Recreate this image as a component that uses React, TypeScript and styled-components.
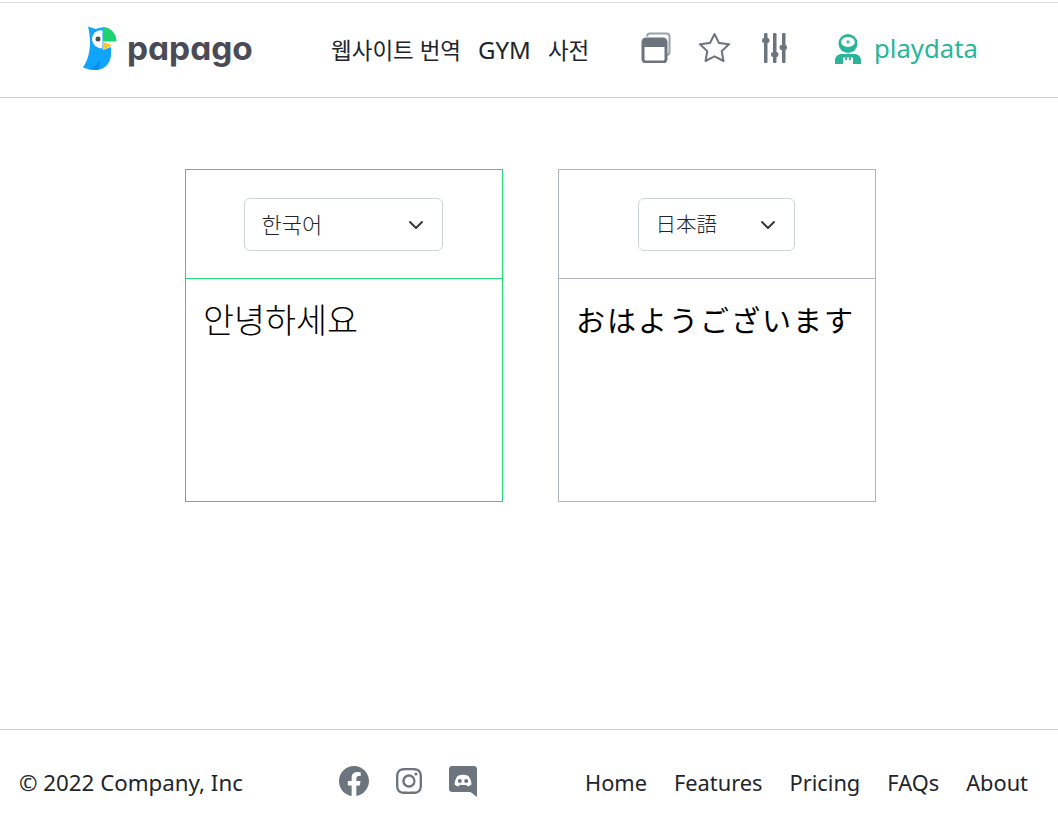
import React from 'react';
import styled, { createGlobalStyle } from 'styled-components';
import { BsFacebook, BsInstagram, BsStar } from 'react-icons/bs';

const GlobalStyle = createGlobalStyle`
  html, body {
    margin: 0;
    padding: 0;
    background: #fff;
    font-family: "Noto Sans", "Noto Sans CJK KR", sans-serif;
  }
`;

const Page = styled.div`
  width: 1058px;
  height: 832px;
  padding-top: 2px;
  box-sizing: border-box;
  display: flex;
  flex-direction: column;
  overflow: hidden;
`;

const Header = styled.header`
  height: 96px;
  box-sizing: border-box;
  border-top: 1px solid #dcdcdc;
  border-bottom: 1px solid #cfcfcf;
  display: flex;
  align-items: center;
  padding-left: 83px;
`;

const Logo = styled.a`
  display: flex;
  align-items: center;
  gap: 10px;
  width: 248px;
  margin-bottom: 5px;
  font-family: Inter, sans-serif;
  font-feature-settings: "cv11";
  font-size: 33.4px;
  font-weight: 700;
  color: #4b4a57;
`;

const Nav = styled.nav`
  display: flex;
  align-items: baseline;
  gap: 17px;
  width: 310px;
  margin-bottom: 2px;
  font-size: 22.5px;
  color: #212529;
`;

const NavLink = styled.a<{ $size?: number }>`
  white-space: nowrap;
  ${(p) => p.$size && `font-size: ${p.$size}px;`}
`;

const IconBar = styled.div`
  display: flex;
  align-items: center;
  gap: 28px;
  width: 194px;
  margin-bottom: 5px;
  color: #6c757d;
`;

const Star = styled(BsStar)`
  margin-right: 3px;
`;

const Profile = styled.a`
  display: flex;
  align-items: center;
  gap: 13px;
  margin-bottom: 3px;
  font-size: 25.7px;
  color: #2ab59a;
`;

const Main = styled.main`
  flex: 1;
  display: flex;
  gap: 55px;
  padding: 71px 0 0 185px;
`;

const Card = styled.section<{ $accent: string }>`
  width: 318px;
  height: 333px;
  box-sizing: border-box;
  border: 1px solid ${(p) => p.$accent};
  display: flex;
  flex-direction: column;
`;

const CardHead = styled.div<{ $accent: string }>`
  height: 109px;
  box-sizing: border-box;
  border-bottom: 1px solid ${(p) => p.$accent};
  display: flex;
  justify-content: center;
  align-items: flex-start;
  padding-top: 28px;
`;

const Select = styled.select<{ $width: number; $size: number }>`
  width: ${(p) => p.$width}px;
  height: 53px;
  margin-right: 2px;
  box-sizing: border-box;
  appearance: none;
  border: 1px solid #ced4da;
  border-radius: 6px;
  padding: 0 17px 4px;
  font-family: "Noto Sans CJK KR", sans-serif;
  font-size: ${(p) => p.$size}px;
  font-weight: 300;
  color: #212529;
  background: #fff url("data:image/svg+xml,%3csvg xmlns='http://www.w3.org/2000/svg' viewBox='0 0 16 16'%3e%3cpath fill='none' stroke='%23343a40' stroke-linecap='round' stroke-linejoin='round' stroke-width='2' d='M2 5l6 6 6-6'/%3e%3c/svg%3e") no-repeat right 18px top 18px / 16px 16px;
`;

const CardBody = styled.div<{ $size: number; $spacing: number; $weight: number }>`
  padding: 16px 17px;
  font-family: "Noto Sans CJK KR", sans-serif;
  font-size: ${(p) => p.$size}px;
  font-weight: ${(p) => p.$weight};
  letter-spacing: ${(p) => p.$spacing}px;
  line-height: 48px;
  color: #000;
  white-space: nowrap;
`;

const Footer = styled.footer`
  height: 103px;
  box-sizing: border-box;
  border-top: 1px solid #cfcfcf;
  display: flex;
  align-items: center;
  padding: 0 30px 0 19px;
  color: #212529;
`;

const Copy = styled.span`
  width: 320px;
  padding-top: 3px;
  font-size: 22.3px;
  white-space: nowrap;
`;

const Socials = styled.div`
  display: flex;
  align-items: center;
  gap: 27px;
  width: 246px;
  color: #6c757d;
`;

const FooterLinks = styled.nav`
  display: flex;
  gap: 27px;
  margin-left: auto;
  padding-top: 3px;
  font-size: 21.8px;
`;

const ParrotIcon = () => (
  <svg width="34" height="44" viewBox="83 26 34 44">
    <path fill="#10a4fb" d="M88 26.500l7.500 2.500c2.500-.9 5-1.500 7.500-1.500V50l8-3v7c0 9-6.500 16-15 16-4 0-9.500-1-13-2.500 3.500-5 5.500-11 6.500-17.500.8-5.500 1-13-1.500-23.500z" />
    <path fill="#0a8bf0" d="M88 69.300c5-1 9-4.300 11.500-9.300 1 4.500-.2 8-2.500 10z" />
    <path fill="#fff" d="M102.500 30.500a8.800 8.800 0 0 0-10.500 8.500c0 5 4.500 9.500 10.500 9.500z" />
    <circle cx="98" cy="39" r="2.500" fill="#4b4a57" />
    <path fill="#1ed36f" d="M103 27c7.500 0 13.500 6.500 13.500 14.500H103z" />
    <path fill="#fec325" d="M103 42l9 3.300-9 4.700z" />
  </svg>
);

const StackIcon = () => (
  <svg width="30" height="31" viewBox="0 0 30 31">
    <path fill="none" stroke="#9aa1a8" strokeWidth="2" d="M6 4.500c0-1.700 1-3 3-3h16.500c2 0 3 1.300 3 3V20c0 2-1 3-3 3" />
    <rect x="2" y="7" width="23" height="23" rx="3" fill="none" stroke="#6c757d" strokeWidth="3" />
    <path fill="#6c757d" d="M2 9.500c0-1.500 1-2.500 2.500-2.500h18c1.500 0 2.500 1 2.500 2.500V15H2z" />
  </svg>
);

const SlidersIcon = () => (
  <svg width="26" height="30" viewBox="0 0 26 30" fill="#6c757d">
    <rect x="3" y="0" width="3.500" height="30" rx="1.200" />
    <rect x="1" y="5" width="7.500" height="5" rx="2.200" />
    <rect x="12" y="0" width="3.500" height="30" rx="1.200" />
    <rect x="10" y="19" width="7.500" height="5" rx="2.200" />
    <rect x="21" y="0" width="3.500" height="30" rx="1.200" />
    <rect x="18.500" y="12" width="7.500" height="5" rx="2.200" />
  </svg>
);

const RobotIcon = () => (
  <svg width="26" height="30" viewBox="0 0 26 30">
    <circle cx="13" cy="9.500" r="9.500" fill="#2ab59a" />
    <ellipse cx="13" cy="8" rx="6.800" ry="5" fill="#fff" />
    <path fill="#2ab59a" d="M11 7.500h1.500V6h1v1.500H15v1h-1.500V10h-1V8.500H11z" />
    <path fill="#2ab59a" d="M0 30v-3.500C0 22.500 3 20 7 20h12c4 0 7 2.500 7 6.500V30z" />
    <rect x="8" y="23.500" width="10" height="6.500" fill="#fff" />
    <rect x="10" y="23.500" width="2" height="2.500" fill="#2ab59a" />
    <rect x="14" y="23.500" width="2" height="2.500" fill="#2ab59a" />
  </svg>
);

const DiscordIcon = () => (
  <svg width="28" height="31" viewBox="0 0 28 31">
    <path fill="#6c757d" d="M3 0h22c1.700 0 3 1.300 3 3v28l-6.500-5H3c-1.700 0-3-1.300-3-3V3c0-1.700 1.300-3 3-3z" />
    <path fill="#fff" d="M8.500 10c3.500-1.600 7.500-1.600 11 0 2 3 3 5.700 3 8.500-1.200 1-2.600 1.600-4 2l-1-1.500H10.500l-1 1.500c-1.400-.4-2.800-1-4-2 0-2.800 1-5.500 3-8.500z" />
    <circle cx="10.800" cy="15" r="2" fill="#6c757d" />
    <circle cx="17.200" cy="15" r="2" fill="#6c757d" />
  </svg>
);

export default function App() {
  return (
    <Page>
      <GlobalStyle />
      <Header>
        <Logo>
          <ParrotIcon />
          papago
        </Logo>
        <Nav>
          <NavLink>웹사이트 번역</NavLink>
          <NavLink $size={24}>GYM</NavLink>
          <NavLink>사전</NavLink>
        </Nav>
        <IconBar>
          <StackIcon />
          <Star size={31} />
          <SlidersIcon />
        </IconBar>
        <Profile>
          <RobotIcon />
          playdata
        </Profile>
      </Header>
      <Main>
        <Card $accent="#22dc74">
          <CardHead $accent="#22dc74">
            <Select $width={199} $size={22} defaultValue="ko">
              <option value="ko">한국어</option>
              <option value="en">English</option>
            </Select>
          </CardHead>
          <CardBody $size={33.7} $spacing={0} $weight={300}>안녕하세요</CardBody>
        </Card>
        <Card $accent="#adb5bd">
          <CardHead $accent="#adb5bd">
            <Select $width={157} $size={20.5} defaultValue="ja">
              <option value="ja">日本語</option>
              <option value="en">English</option>
            </Select>
          </CardHead>
          <CardBody lang="ja" $size={29} $spacing={2} $weight={400}>おはようございます</CardBody>
        </Card>
      </Main>
      <Footer>
        <Copy>© 2022 Company, Inc</Copy>
        <Socials>
          <BsFacebook size={30} />
          <BsInstagram size={26} />
          <DiscordIcon />
        </Socials>
        <FooterLinks>
          <NavLink>Home</NavLink>
          <NavLink>Features</NavLink>
          <NavLink>Pricing</NavLink>
          <NavLink>FAQs</NavLink>
          <NavLink>About</NavLink>
        </FooterLinks>
      </Footer>
    </Page>
  );
}
